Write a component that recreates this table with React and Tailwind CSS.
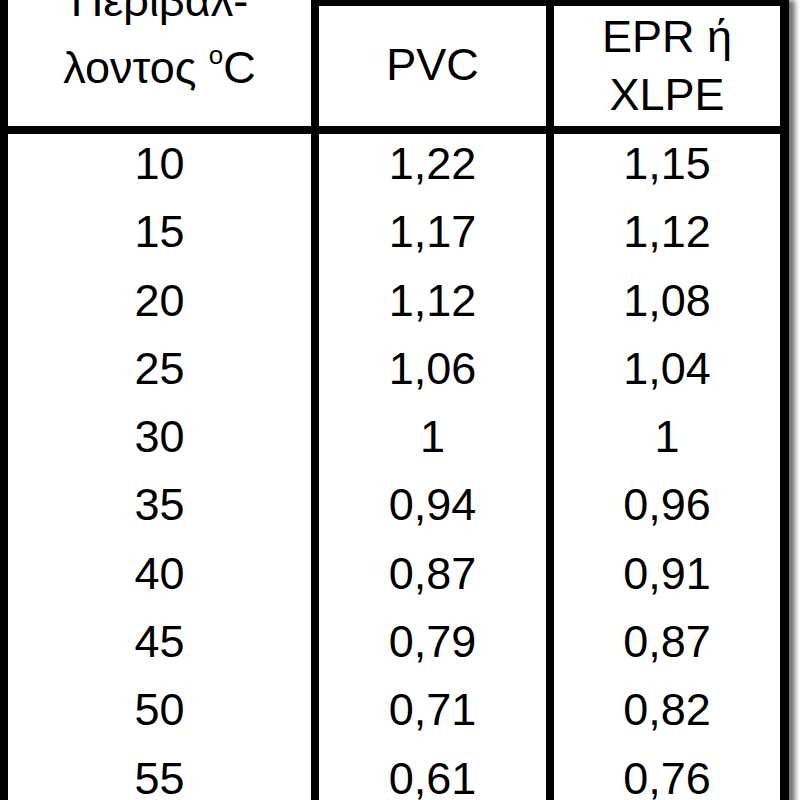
import React from 'react';

const rows = [
  ['10', '1,22', '1,15'],
  ['15', '1,17', '1,12'],
  ['20', '1,12', '1,08'],
  ['25', '1,06', '1,04'],
  ['30', '1', '1'],
  ['35', '0,94', '0,96'],
  ['40', '0,87', '0,91'],
  ['45', '0,79', '0,87'],
  ['50', '0,71', '0,82'],
  ['55', '0,61', '0,76'],
];

const App = () => {
  return (
    <div
      className="w-[800px] h-[800px] overflow-hidden bg-white text-black text-[45px]"
      style={{ fontFamily: '"Liberation Sans", Arial, sans-serif' }}
    >
      <div className="w-[789px] border-l-8 border-r-[9px] border-black shadow-[6px_0_5px_rgba(0,0,0,0.55)]">
        {/* header */}
        <div className="flex h-[134px] border-b-8 border-black">
          <div className="w-[311px] shrink-0 border-r-8 border-black flex flex-col justify-end items-center pb-[25px] leading-[67px]">
            <div>Περιβαλ-</div>
            <div>
              λοντος <span className="text-[26px] leading-none align-[19px]">o</span>C
            </div>
          </div>
          <div className="flex-1 flex border-t-[6px] border-black">
            <div className="w-[235px] shrink-0 border-r-8 border-black flex items-center justify-center pb-[2px]">
              PVC
            </div>
            <div className="flex-1 flex flex-col items-center justify-center leading-[58px]">
              <div>EPR ή</div>
              <div>XLPE</div>
            </div>
          </div>
        </div>

        {/* body */}
        {rows.map((r) => (
          <div key={r[0]} className="flex h-[68.3px] leading-[60px] text-center">
            <div className="w-[311px] shrink-0 border-r-8 border-black">{r[0]}</div>
            <div className="w-[235px] shrink-0 border-r-8 border-black">{r[1]}</div>
            <div className="flex-1">{r[2]}</div>
          </div>
        ))}
      </div>
    </div>
  );
};

export default App;
